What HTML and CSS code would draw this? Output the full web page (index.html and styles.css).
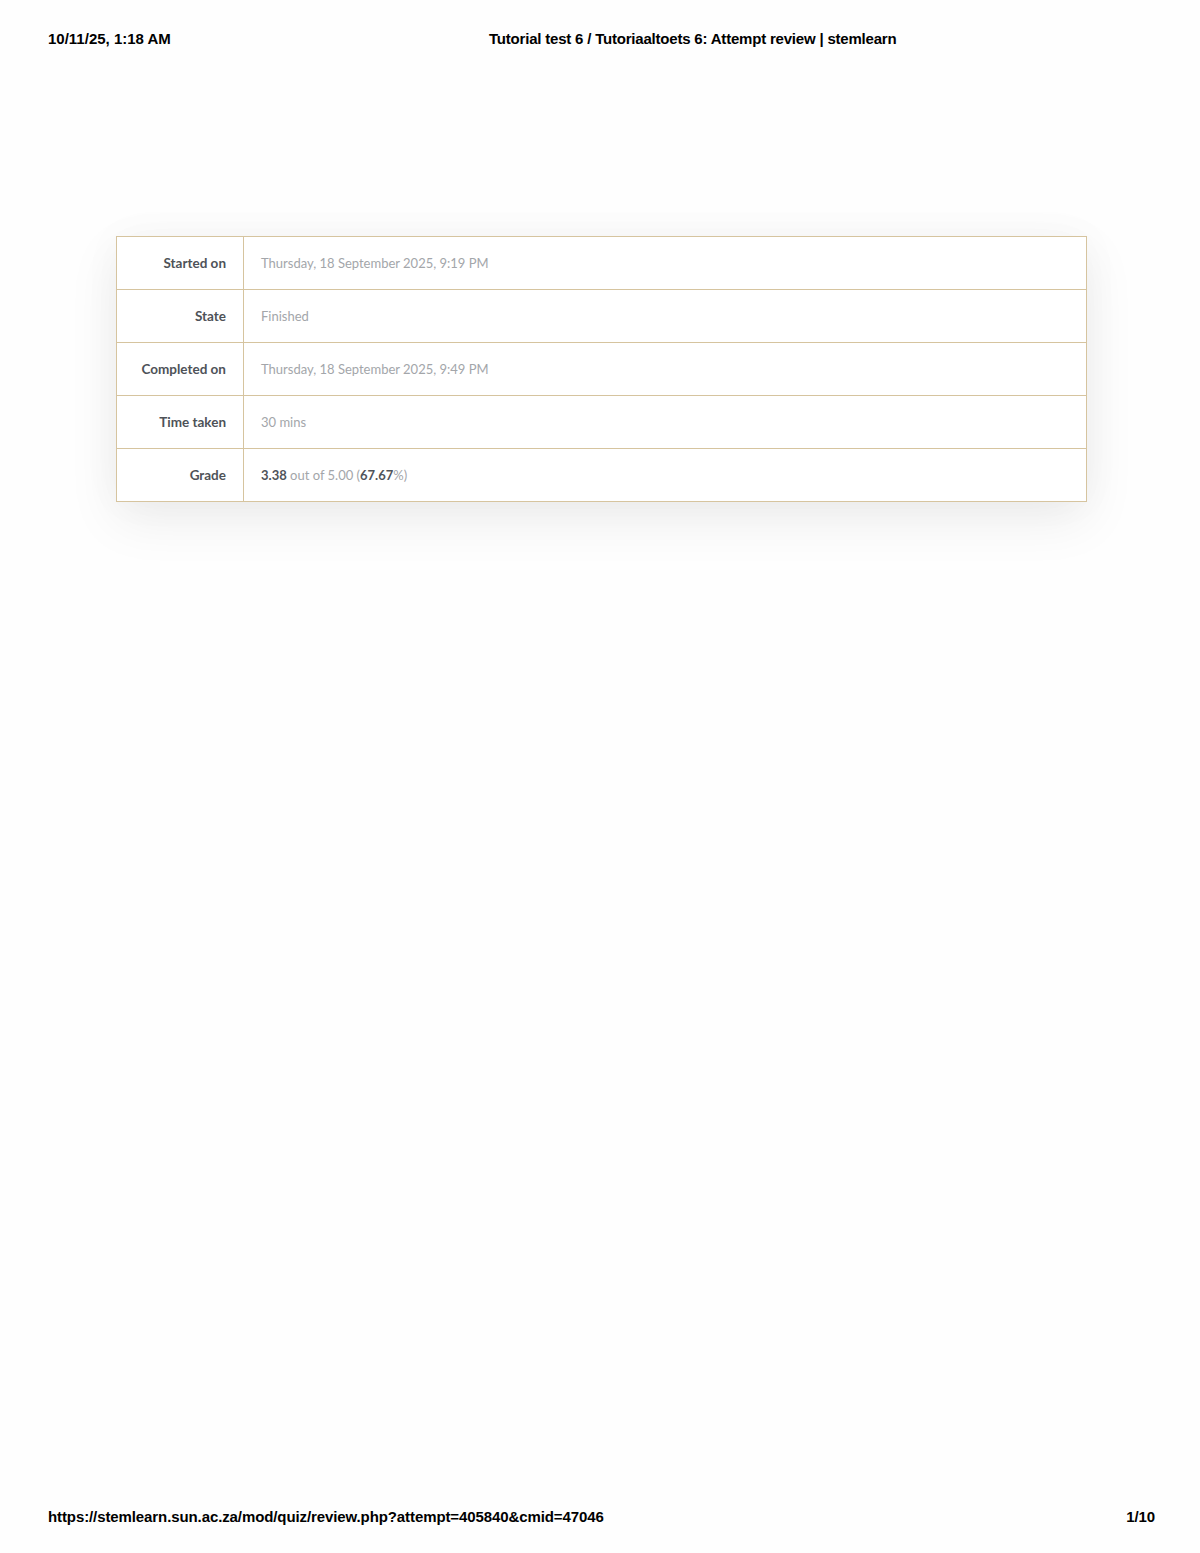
FILE: index.html
```html
<!DOCTYPE html>
<html>
<head>
<meta charset="utf-8">
<title>Tutorial test 6 / Tutoriaaltoets 6: Attempt review | stemlearn</title>
<link rel="stylesheet" href="styles.css">
</head>
<body>
<div class="page">
  <header class="print-head">
    <span class="date">10/11/25, 1:18 AM</span>
    <span class="title">Tutorial test 6 / Tutoriaaltoets 6: Attempt review | stemlearn</span>
  </header>
  <main class="content">
    <table class="summary">
      <tbody>
        <tr><th>Started on</th><td>Thursday, 18 September 2025, 9:19 PM</td></tr>
        <tr><th>State</th><td>Finished</td></tr>
        <tr><th>Completed on</th><td>Thursday, 18 September 2025, 9:49 PM</td></tr>
        <tr><th>Time taken</th><td>30 mins</td></tr>
        <tr><th>Grade</th><td><b>3.38</b> out of 5.00 (<b>67.67</b>%)</td></tr>
      </tbody>
    </table>
  </main>
  <footer class="print-foot">
    <span class="url">https://stemlearn.sun.ac.za/mod/quiz/review.php?attempt=405840&amp;cmid=47046</span>
    <span class="pages">1/10</span>
  </footer>
</div>
</body>
</html>
```
FILE: styles.css
```css
html, body {
  margin: 0;
  padding: 0;
  background: #fefefe;
}
.page {
  width: 1200px;
  height: 1553px;
  display: flex;
  flex-direction: column;
}
.print-head,
.print-foot {
  font-family: "Liberation Sans", Arial, sans-serif;
  font-weight: bold;
  font-size: 15px;
  color: #000;
  line-height: 18px;
}
.print-head {
  display: grid;
  grid-template-columns: 441px auto;
  padding: 30px 0 0 48px;
}
.print-head .title {
  letter-spacing: -0.2px;
}
.content {
  flex: 1;
  padding: 188px 0 0 116px;
}
.summary {
  width: 971px;
  border-collapse: collapse;
  background: #fff;
  box-shadow: 0 18px 50px rgba(0, 0, 0, 0.07), 0 0 40px rgba(0, 0, 0, 0.03);
  font-family: Lato, "Open Sans", sans-serif;
  font-size: 13px;
}
.summary th,
.summary td {
  border: 1px solid #d6c49f;
  height: 52px;
  padding: 0;
  vertical-align: middle;
}
.summary th {
  width: 109px;
  text-align: right;
  padding-right: 17px;
  font-weight: bold;
  font-size: 13.5px;
  color: #4e5258;
}
.summary td {
  text-align: left;
  padding-left: 17px;
  color: #a3a6aa;
}
.summary td b {
  color: #50545a;
}
.print-foot {
  display: flex;
  justify-content: space-between;
  padding: 0 45px 27px 48px;
  letter-spacing: -0.1px;
}
```
